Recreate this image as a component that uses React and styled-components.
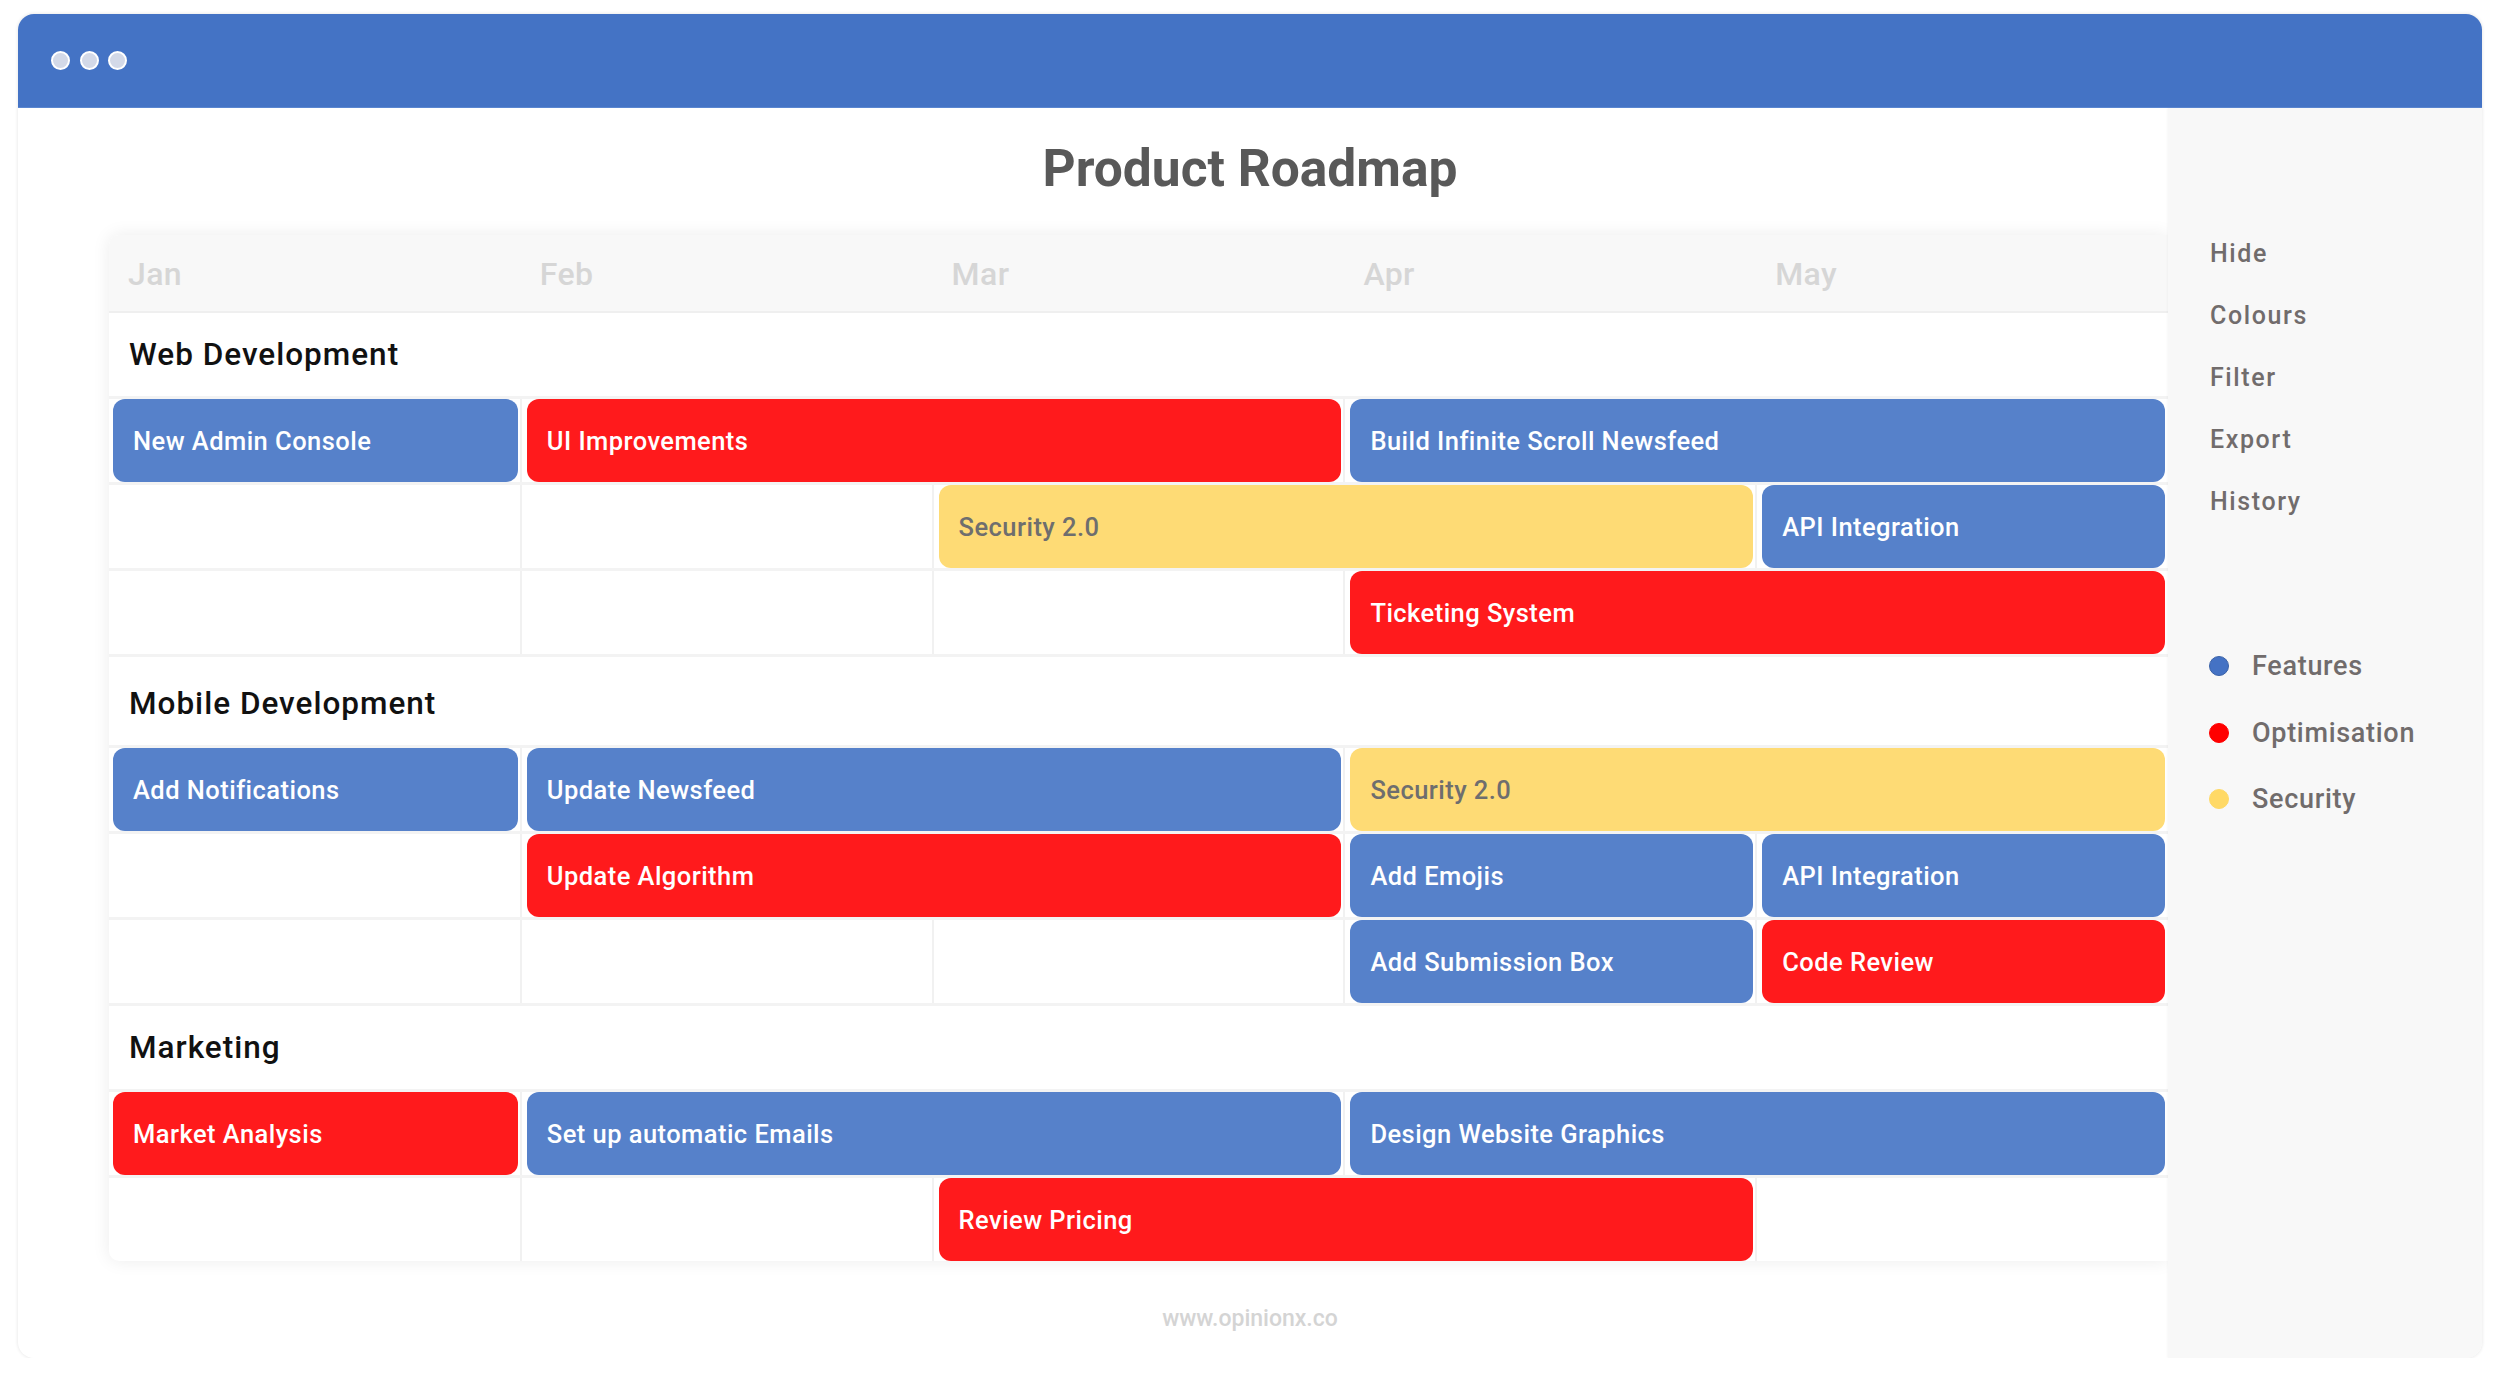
import React from 'react';
import styled, { createGlobalStyle } from 'styled-components';

const Global = createGlobalStyle`
  html, body { margin: 0; padding: 0; background: #ffffff; }
  body { font-family: Roboto, "Noto Sans", "Liberation Sans", sans-serif; }
  *, *::before, *::after { box-sizing: border-box; }
`;

const TONES = {
  blue: { bg: '#5681CA', fg: '#ffffff' },
  red: { bg: '#FF1A1C', fg: '#ffffff' },
  yellow: { bg: '#FEDB75', fg: '#6e6e6e' },
};

const Window = styled.div`
  margin: 14px 18px 0;
  width: 2464px;
  height: 1344px;
  border-radius: 16px;
  overflow: hidden;
  background: #ffffff;
  box-shadow: 0 0 3px 1px rgba(0, 0, 0, 0.07);
  display: flex;
  flex-direction: column;
`;

const TitleBar = styled.div`
  flex: none;
  height: 94px;
  background: #4473c5;
  border-bottom: 1px solid #5a86d0;
  display: flex;
  align-items: center;
  gap: 9.5px;
  padding-left: 33px;
`;

const WinDot = styled.span`
  width: 19px;
  height: 19px;
  border-radius: 50%;
  background: #d3d9e8;
  border: 2px solid #ffffff;
`;

const Body = styled.div`
  flex: 1;
  min-height: 0;
  display: flex;
`;

const Main = styled.div`
  flex: 1;
  min-width: 0;
  display: flex;
  flex-direction: column;
`;

const Title = styled.h1`
  flex: none;
  margin: 0;
  padding: 34.5px 0 0 314px;
  height: 127px;
  text-align: center;
  font-size: 51.5px;
  line-height: 1;
  font-weight: 700;
  color: #595959;
`;

const Board = styled.div`
  flex: none;
  margin-left: 91px;
  background: #ffffff;
  border-radius: 10px 0 0 10px;
  box-shadow: 0 0 18px rgba(0, 0, 0, 0.08);
  overflow: hidden;
`;

const Header = styled.div`
  display: grid;
  grid-template-columns: repeat(5, 1fr);
  height: 78px;
  background: #f8f8f8;
  border-bottom: 2px solid #efefef;
`;

const Month = styled.div`
  display: flex;
  align-items: center;
  padding: 2px 0 0 19px;
  font-size: 32px;
  font-weight: 500;
  letter-spacing: 0.4px;
  color: #d6d6d6;
`;

const SectionLabel = styled.div`
  height: ${(p) => p.$h}px;
  display: flex;
  align-items: center;
  padding: ${(p) => p.$h - 86}px 0 0 20px;
  border-bottom: 3px solid #f3f3f3;
  font-size: 31.5px;
  font-weight: 500;
  letter-spacing: 1px;
  color: #111111;
`;

const LINE = 'linear-gradient(#f1f1f1, #f1f1f1)';

const Track = styled.div`
  display: grid;
  grid-template-columns: repeat(5, 1fr);
  height: ${(p) => (p.$last ? 83 : 86)}px;
  border-bottom: ${(p) => (p.$last ? '0' : '3px solid #f3f3f3')};
  background-image: ${LINE}, ${LINE}, ${LINE}, ${LINE};
  background-size: 2px 100%;
  background-repeat: no-repeat;
  background-position: 20% 0, 40% 0, 60% 0, 80% 0;
`;

const Bar = styled.div`
  grid-row: 1;
  grid-column: ${(p) => p.$start + 1} / span ${(p) => p.$span};
  margin: 0 3px 0 ${(p) => (p.$start === 0 ? 4 : 6)}px;
  border-radius: 12px;
  background: ${(p) => TONES[p.$tone].bg};
  color: ${(p) => TONES[p.$tone].fg};
  display: flex;
  align-items: center;
  padding-left: 20px;
  font-size: 25.5px;
  font-weight: 500;
  letter-spacing: 0.45px;
  white-space: nowrap;
`;

const Footer = styled.div`
  flex: none;
  margin-top: 46px;
  padding-left: 314px;
  text-align: center;
  font-size: 23px;
  line-height: 1;
  font-weight: 500;
  color: #d4d4d4;
`;

const Sidebar = styled.aside`
  flex: none;
  width: 314px;
  background: #f8f8f8;
  box-shadow: -1px 0 2px rgba(0, 0, 0, 0.03);
  padding: 115px 0 0 42px;
`;

const Nav = styled.nav`
  display: flex;
  flex-direction: column;
`;

const NavItem = styled.div`
  height: 62px;
  line-height: 62px;
  font-size: 25px;
  font-weight: 500;
  letter-spacing: 1.6px;
  color: #716c6c;
`;

const Legend = styled.div`
  margin-top: 100px;
  margin-left: -1px;
  display: flex;
  flex-direction: column;
`;

const LegendItem = styled.div`
  height: 66.5px;
  display: flex;
  align-items: center;
  gap: 23px;
  font-size: 27px;
  font-weight: 500;
  letter-spacing: 0.7px;
  color: #716c6c;
`;

const LegendDot = styled.span`
  flex: none;
  width: 20px;
  height: 20px;
  border-radius: 50%;
  background: ${(p) => p.$color};
  border: 1px solid ${(p) => p.$edge};
`;

const MONTHS = ['Jan', 'Feb', 'Mar', 'Apr', 'May'];

const SECTIONS = [
  {
    name: 'Web Development',
    labelHeight: 86,
    rows: [
      [
        ['New Admin Console', 0, 1, 'blue'],
        ['UI Improvements', 1, 2, 'red'],
        ['Build Infinite Scroll Newsfeed', 3, 2, 'blue'],
      ],
      [
        ['Security 2.0', 2, 2, 'yellow'],
        ['API Integration', 4, 1, 'blue'],
      ],
      [['Ticketing System', 3, 2, 'red']],
    ],
  },
  {
    name: 'Mobile Development',
    labelHeight: 91,
    rows: [
      [
        ['Add Notifications', 0, 1, 'blue'],
        ['Update Newsfeed', 1, 2, 'blue'],
        ['Security 2.0', 3, 2, 'yellow'],
      ],
      [
        ['Update Algorithm', 1, 2, 'red'],
        ['Add Emojis', 3, 1, 'blue'],
        ['API Integration', 4, 1, 'blue'],
      ],
      [
        ['Add Submission Box', 3, 1, 'blue'],
        ['Code Review', 4, 1, 'red'],
      ],
    ],
  },
  {
    name: 'Marketing',
    labelHeight: 86,
    rows: [
      [
        ['Market Analysis', 0, 1, 'red'],
        ['Set up automatic Emails', 1, 2, 'blue'],
        ['Design Website Graphics', 3, 2, 'blue'],
      ],
      [['Review Pricing', 2, 2, 'red']],
    ],
  },
];

const NAV = ['Hide', 'Colours', 'Filter', 'Export', 'History'];

const LEGEND = [
  ['Features', '#4472c4', '#3a62a8'],
  ['Optimisation', '#ff0000', '#ff0000'],
  ['Security', '#ffd966', '#ffd966'],
];

export default function App() {
  return (
    <>
      <Global />
      <Window>
        <TitleBar>
          <WinDot />
          <WinDot />
          <WinDot />
        </TitleBar>
        <Body>
          <Main>
            <Title>Product Roadmap</Title>
            <Board>
              <Header>
                {MONTHS.map((m) => (
                  <Month key={m}>{m}</Month>
                ))}
              </Header>
              {SECTIONS.map((s, si) => (
                <React.Fragment key={s.name}>
                  <SectionLabel $h={s.labelHeight}>{s.name}</SectionLabel>
                  {s.rows.map((row, ri) => (
                    <Track
                      key={ri}
                      $last={si === SECTIONS.length - 1 && ri === s.rows.length - 1}
                    >
                      {row.map(([label, start, span, tone]) => (
                        <Bar key={label + start} $start={start} $span={span} $tone={tone}>
                          {label}
                        </Bar>
                      ))}
                    </Track>
                  ))}
                </React.Fragment>
              ))}
            </Board>
            <Footer>www.opinionx.co</Footer>
          </Main>
          <Sidebar>
            <Nav>
              {NAV.map((n) => (
                <NavItem key={n}>{n}</NavItem>
              ))}
            </Nav>
            <Legend>
              {LEGEND.map(([label, color, edge]) => (
                <LegendItem key={label}>
                  <LegendDot $color={color} $edge={edge} />
                  {label}
                </LegendItem>
              ))}
            </Legend>
          </Sidebar>
        </Body>
      </Window>
    </>
  );
}
